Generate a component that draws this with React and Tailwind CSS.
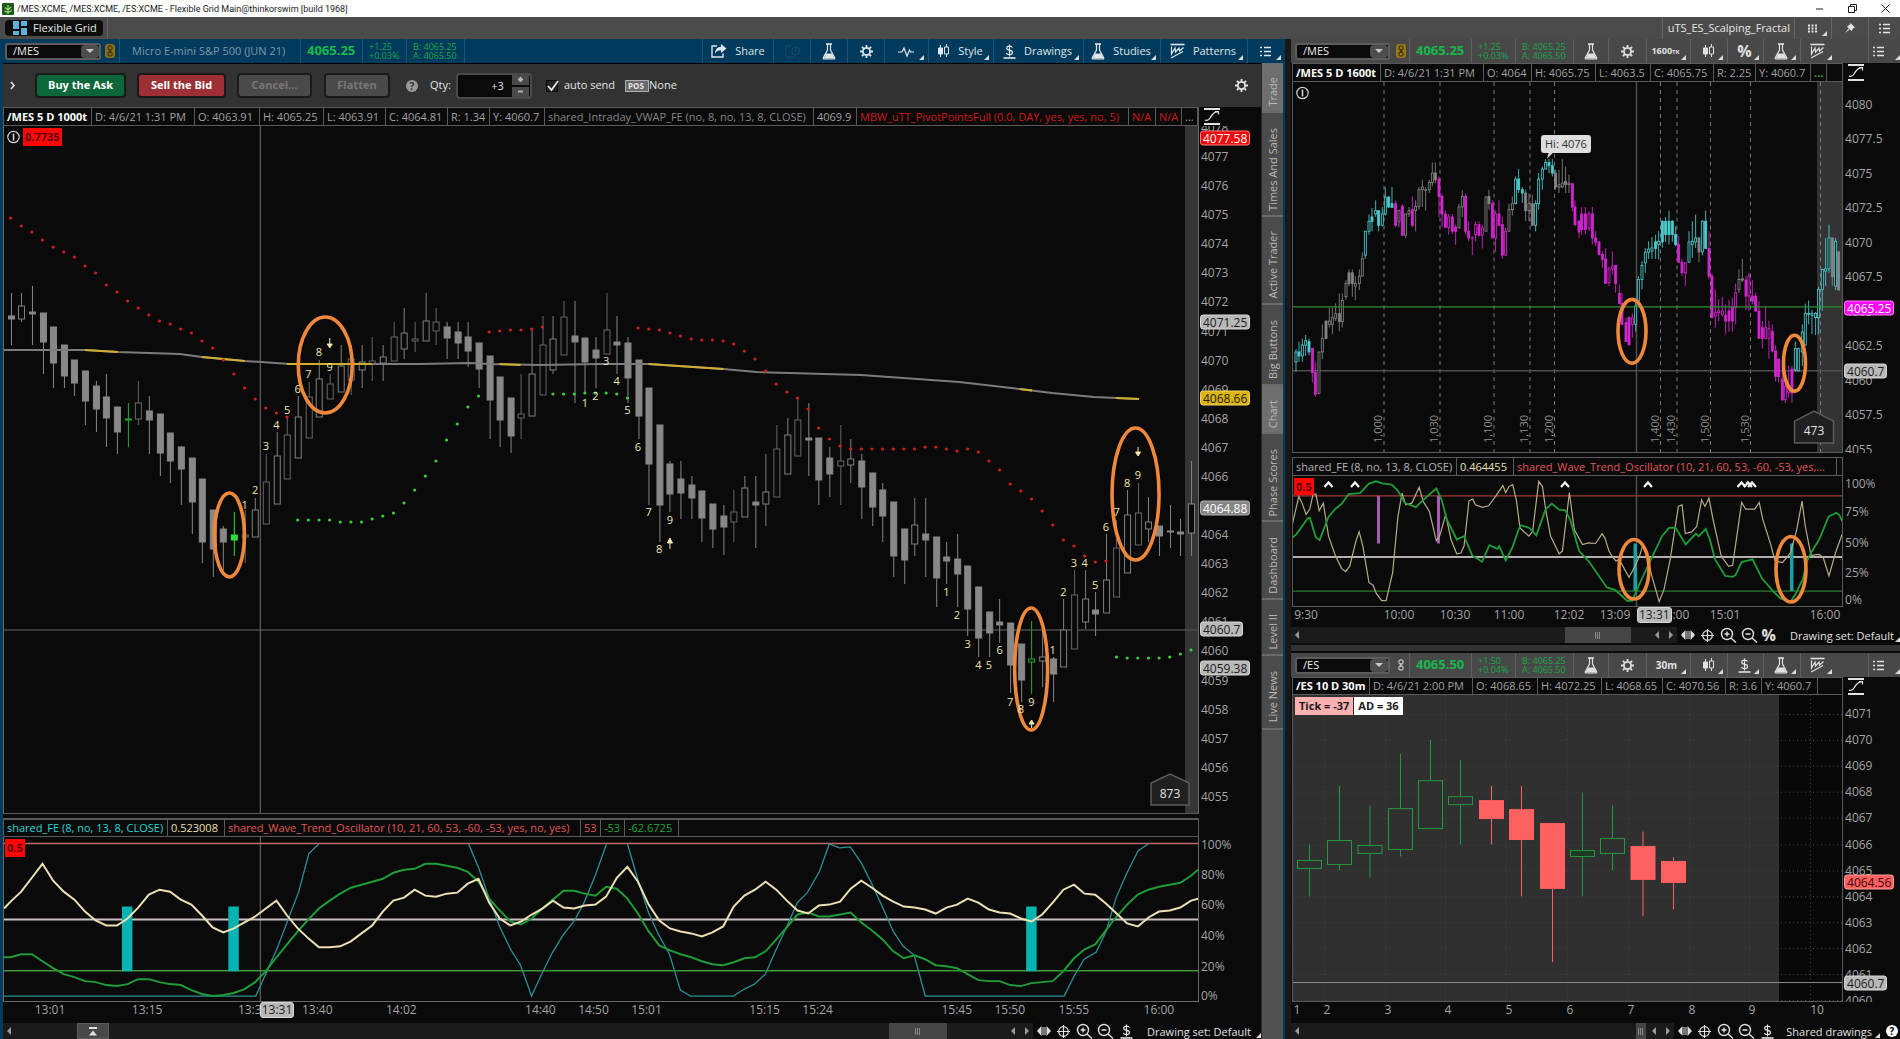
import React from "react";

/* ------------------------------------------------------------------ data */

const MAIN_X0 = 10.6;
const MAIN_STEP = 10.643;
const bx = (i) => MAIN_X0 + MAIN_STEP * i;

// [high, body top, body bottom, low, kind]  f = filled, h = hollow, g/G = green
const MAIN_CANDLES = [
  [293, 316, 319, 345, "f"], [293, 306, 319, 322, "h"], [286, 312, 314, 345, "f"], [313, 313, 342, 374, "f"],
  [327, 327, 363, 388, "f"], [345, 345, 376, 388, "f"], [360, 360, 383, 396, "f"], [371, 371, 401, 425, "f"],
  [381, 386, 409, 432, "f"], [374, 397, 418, 447, "f"], [407, 407, 432, 454, "f"], [403, 419, 420, 447, "g"],
  [381, 403, 419, 425, "h"], [396, 411, 420, 454, "f"], [414, 414, 453, 476, "f"], [433, 433, 461, 483, "f"],
  [446, 447, 469, 505, "f"], [458, 458, 502, 534, "f"], [479, 479, 542, 563, "f"], [510, 510, 549, 577, "f"],
  [526, 529, 542, 570, "f"], [512, 535, 540, 556, "G"], [510, 535, 537, 563, "h"], [498, 510, 537, 537, "h"],
  [454, 482, 524, 524, "h"], [432, 456, 504, 504, "h"], [418, 435, 479, 479, "h"], [396, 417, 458, 458, "h"],
  [382, 397, 438, 438, "h"], [360, 379, 417, 417, "h"], [374, 384, 399, 399, "h"], [345, 366, 392, 392, "h"],
  [345, 359, 380, 395, "h"], [345, 362, 370, 388, "h"], [337, 361, 364, 381, "h"], [345, 357, 363, 381, "h"],
  [322, 337, 361, 361, "h"], [308, 333, 349, 359, "h"], [322, 339, 341, 352, "h"], [293, 321, 341, 341, "h"],
  [308, 322, 331, 345, "h"], [322, 327, 338, 359, "f"], [322, 332, 343, 359, "f"], [322, 337, 351, 367, "f"],
  [343, 343, 369, 388, "f"], [356, 356, 400, 439, "f"], [377, 377, 420, 447, "f"], [398, 398, 436, 453, "f"],
  [374, 414, 418, 439, "h"], [328, 374, 416, 416, "h"], [316, 345, 395, 395, "h"], [316, 339, 370, 374, "h"],
  [301, 317, 355, 355, "h"], [301, 336, 342, 403, "f"], [338, 338, 362, 393, "f"], [337, 350, 358, 388, "f"],
  [293, 330, 354, 354, "h"], [316, 342, 345, 374, "f"], [337, 343, 378, 403, "f"], [360, 360, 416, 439, "f"],
  [388, 388, 464, 505, "f"], [425, 425, 505, 542, "f"], [461, 464, 494, 512, "f"], [461, 479, 493, 519, "f"],
  [476, 485, 498, 519, "f"], [491, 491, 518, 542, "f"], [504, 504, 529, 548, "f"], [505, 516, 527, 555, "f"],
  [490, 512, 522, 542, "h"], [476, 488, 517, 517, "h"], [476, 502, 505, 548, "f"], [454, 492, 504, 526, "h"],
  [425, 449, 497, 497, "h"], [418, 435, 474, 474, "h"], [398, 420, 456, 456, "h"], [403, 438, 440, 476, "f"],
  [438, 438, 480, 505, "f"], [447, 458, 474, 497, "f"], [425, 461, 466, 505, "h"], [439, 459, 465, 483, "h"],
  [454, 461, 487, 519, "f"], [473, 473, 507, 526, "f"], [483, 490, 516, 542, "f"], [502, 502, 556, 577, "f"],
  [529, 529, 560, 584, "f"], [498, 525, 544, 556, "h"], [498, 534, 540, 577, "f"], [537, 537, 578, 607, "f"],
  [542, 557, 561, 584, "f"], [534, 559, 574, 607, "f"], [566, 566, 609, 636, "f"], [587, 587, 638, 657, "f"],
  [612, 612, 633, 657, "f"], [599, 622, 625, 643, "f"], [623, 623, 665, 693, "f"], [644, 644, 680, 702, "f"],
  [621, 659, 662, 694, "g"], [627, 657, 661, 687, "h"], [657, 659, 674, 702, "f"], [599, 630, 667, 667, "h"],
  [570, 595, 649, 649, "h"], [570, 599, 622, 629, "h"], [592, 610, 614, 636, "f"], [534, 580, 613, 613, "h"],
  [520, 548, 597, 597, "h"], [490, 515, 573, 573, "h"], [483, 513, 545, 545, "h"], [497, 522, 529, 542, "h"],
  [526, 526, 536, 556, "f"], [505, 531, 532, 548, "f"], [519, 532, 534, 556, "f"], [461, 504, 533, 556, "h"],
];

// [bar index, y, digit]
const COUNTS = [
  [22, 505, 1], [23, 490, 2], [24, 446, 3], [25, 425, 4], [26, 410, 5], [27, 389, 6], [28, 374, 7], [29, 352, 8], [30, 367, 9],
  [54, 403, 1], [55, 396, 2], [56, 361, 3], [57, 381, 4], [58, 410, 5], [59, 447, 6], [60, 512, 7], [61, 549, 8], [62, 520, 9],
  [88, 592, 1], [89, 615, 2], [90, 644, 3], [91, 665, 4], [92, 665, 5], [93, 650, 6], [94, 702, 7], [95, 709, 8], [96, 702, 9],
  [98, 650, 1], [99, 592, 2], [100, 563, 3], [101, 563, 4], [102, 585, 5], [103, 527, 6], [104, 512, 7], [105, 483, 8], [106, 475, 9],
];

const RED_DOTS = [
  [0, [218, 226, 232, 240, 247, 252, 257, 266, 273, 285, 292, 301, 308, 315, 321, 324, 329, 333, 341, 348, 360, 374, 388, 399, 408, 413, 417]],
  [45, [332, 331, 330, 330, 329, 327]],
  [59, [328, 329, 330, 333, 336, 339, 340, 340, 341, 344, 351, 359, 371, 384, 392, 398, 409, 428, 439, 446, 449, 449, 449, 449, 449, 449, 449, 447, 447, 449, 451, 449, 452, 461, 470, 484, 491, 499, 511, 525, 540, 546, 556, 562, 561]],
];
const GREEN_DOTS = [
  [27, [520, 520, 520, 520, 522, 522, 522, 519, 516, 513, 503, 490, 476, 461, 440, 424, 407, 396]],
  [51, [394, 394, 394, 393, 393, 393, 394, 398]],
  [104, [657, 658, 658, 658, 658, 657, 654, 650]],
];

const CREAM = [902, 892, 878, 864, 881, 892, 900, 912, 921, 926, 926, 919, 908, 895, 890, 892, 900, 905, 916, 928, 933, 929, 923, 917, 909, 901, 916, 929, 939, 948, 948, 947, 942, 934, 926, 912, 901, 898, 890, 896, 897, 894, 893, 884, 879, 903, 919, 926, 922, 915, 909, 901, 908, 909, 906, 905, 897, 878, 867, 882, 905, 921, 929, 932, 934, 937, 933, 927, 907, 896, 890, 882, 890, 901, 911, 914, 906, 905, 902, 889, 881, 888, 896, 902, 907, 908, 910, 914, 908, 905, 899, 903, 910, 913, 914, 919, 922, 915, 903, 890, 885, 894, 895, 904, 914, 924, 927, 918, 912, 911, 908, 901];
const GREEN = [958, 955, 955, 962, 969, 975, 978, 982, 983, 986, 987, 985, 980, 980, 983, 985, 986, 991, 995, 997, 996, 994, 990, 983, 972, 958, 945, 932, 920, 909, 901, 894, 888, 885, 882, 879, 873, 870, 869, 864, 864, 866, 868, 872, 882, 899, 911, 922, 925, 919, 909, 900, 891, 891, 894, 896, 887, 889, 899, 914, 932, 946, 951, 955, 958, 962, 965, 966, 963, 959, 958, 952, 940, 928, 915, 913, 917, 917, 915, 913, 923, 931, 940, 952, 959, 956, 960, 966, 967, 969, 975, 981, 982, 982, 986, 987, 984, 983, 982, 972, 959, 950, 945, 931, 917, 905, 895, 890, 887, 885, 883, 876];
const line = (ys) => ys.map((y, i) => `${bx(i).toFixed(1)},${y}`).join(" ");

const CYAN_LINES = [
  "4,997 256,997 277,950 299,892 309,854 319,844",
  "469,844 479,868 489,897 500,927 511,950 521,966 532,997 543,973 553,953 564,935 575,921 585,902 596,875 607,844",
  "628,844 639,882 649,913 659,935 670,955 681,991 691,997 734,997 745,990 755,985 766,975 776,952 787,928 798,903 808,893 820,872 830,844 840,848 851,847 862,863 872,883 883,907 894,932 904,947 915,956 926,997 1065,997 1075,977 1085,960 1097,953 1107,932 1117,898 1128,873 1139,851 1149,844",
];

// [x, high, body top, body bottom, low, colour]; capitals are filled; one unit is a third of a pixel
const TICK_A = [
  [18, 660, 668, 698, 728, "c"], [27, 637, 668, 680, 698, "C"], [37, 628, 647, 680, 698, "c"], [47, 617, 634, 648, 680, "c"],
  [57, 628, 637, 668, 678, "C"], [67, 657, 657, 730, 760, "M"], [76, 698, 730, 795, 803, "M"], [87, 668, 668, 793, 793, "g"],
  [97, 585, 628, 668, 690, "g"], [108, 575, 575, 628, 628, "G"], [118, 535, 575, 585, 595, "g"], [127, 535, 565, 585, 615, "g"],
  [137, 522, 553, 567, 575, "g"], [148, 492, 553, 577, 606, "G"], [157, 492, 513, 577, 595, "g"], [168, 452, 462, 502, 512, "g"],
  [177, 420, 430, 462, 470, "G"], [187, 420, 430, 462, 502, "G"], [196, 440, 462, 470, 512, "g"], [208, 420, 440, 462, 482, "g"],
  [217, 368, 388, 440, 440, "g"], [226, 305, 305, 377, 388, "c"], [237, 255, 275, 305, 315, "c"], [246, 235, 262, 275, 305, "C"],
  [257, 212, 243, 253, 262, "c"], [266, 243, 243, 287, 305, "C"], [277, 232, 253, 287, 290, "c"], [286, 172, 202, 253, 258, "c"],
  [296, 200, 202, 232, 235, "C"], [306, 172, 222, 233, 235, "C"], [317, 212, 222, 287, 293, "M"], [327, 240, 243, 275, 293, "g"],
  [337, 224, 230, 317, 320, "M"], [347, 253, 253, 317, 326, "g"], [357, 232, 243, 253, 262, "g"], [367, 200, 240, 287, 293, "M"],
  [377, 212, 230, 243, 305, "g"], [387, 172, 180, 230, 240, "g"], [397, 150, 172, 180, 232, "g"], [407, 172, 180, 182, 243, "g"],
  [418, 150, 158, 180, 190, "g"], [427, 98, 130, 158, 170, "g"], [436, 98, 130, 150, 160, "G"], [447, 140, 148, 200, 262, "M"],
  [456, 192, 200, 253, 293, "M"], [466, 243, 253, 293, 295, "M"], [476, 253, 262, 293, 315, "m"], [487, 253, 262, 305, 313, "M"],
  [497, 285, 293, 305, 346, "M"], [507, 222, 232, 295, 295, "g"], [517, 182, 200, 232, 262, "g"], [527, 192, 200, 305, 315, "M"],
  [536, 275, 305, 325, 335, "M"], [547, 320, 325, 327, 377, "m"], [557, 275, 285, 315, 335, "m"], [567, 275, 285, 317, 320, "M"],
  [577, 285, 295, 317, 357, "m"], [588, 200, 202, 305, 305, "g"], [597, 180, 200, 222, 240, "G"], [607, 212, 222, 325, 326, "M"],
  [617, 243, 253, 325, 367, "m"], [627, 212, 253, 287, 290, "M"], [637, 262, 285, 377, 388, "M"], [647, 295, 305, 377, 377, "m"],
  [657, 222, 240, 305, 305, "g"], [667, 200, 222, 240, 258, "g"], [677, 140, 148, 222, 224, "c"], [686, 118, 148, 180, 190, "C"],
  [697, 172, 180, 190, 220, "C"], [707, 180, 190, 243, 275, "G"], [717, 192, 222, 243, 275, "g"], [727, 195, 222, 287, 287, "G"],
  [737, 212, 222, 287, 305, "c"], [746, 130, 148, 222, 240, "c"], [757, 110, 118, 148, 180, "c"], [767, 88, 98, 118, 118, "c"],
  [777, 88, 98, 108, 130, "C"], [787, 88, 108, 130, 140, "C"], [797, 120, 130, 172, 180, "G"], [807, 120, 165, 172, 190, "g"],
  [817, 88, 160, 172, 175, "g"], [827, 110, 155, 165, 190, "G"], [837, 135, 160, 165, 190, "g"],
];
const TICK_B = [
  [67, 10, 12, 82, 95, "M"], [75, 62, 82, 135, 140, "M"], [87, 120, 125, 157, 175, "M"], [95, 82, 103, 150, 165, "M"],
  [106, 82, 103, 150, 165, "M"], [117, 95, 103, 145, 155, "m"], [127, 82, 103, 175, 195, "M"], [137, 155, 175, 188, 200, "M"],
  [147, 185, 187, 225, 228, "M"], [157, 215, 225, 240, 265, "M"], [167, 205, 238, 312, 312, "M"], [177, 262, 268, 310, 320, "m"],
  [187, 215, 260, 268, 285, "m"], [197, 258, 258, 312, 340, "M"], [208, 315, 342, 372, 375, "M"], [216, 340, 372, 435, 435, "M"],
  [228, 415, 430, 487, 487, "M"], [237, 412, 415, 497, 497, "M"], [247, 402, 415, 435, 475, "m"], [257, 365, 380, 435, 457, "c"],
  [265, 290, 300, 365, 380, "c"], [276, 245, 258, 300, 330, "c"], [286, 205, 218, 250, 280, "c"], [296, 185, 208, 218, 238, "c"],
  [306, 172, 205, 215, 238, "c"], [317, 165, 187, 207, 238, "C"], [326, 155, 185, 195, 240, "c"], [337, 122, 125, 187, 205, "C"],
  [347, 112, 125, 165, 187, "C"], [357, 93, 125, 165, 195, "C"], [367, 122, 125, 165, 187, "C"], [377, 140, 165, 195, 200, "C"],
  [386, 170, 195, 248, 250, "M"], [396, 238, 248, 280, 290, "M"], [406, 248, 250, 280, 320, "m"], [417, 155, 187, 248, 250, "c"],
  [427, 125, 185, 195, 235, "c"], [437, 105, 175, 187, 205, "c"], [447, 172, 175, 217, 248, "G"], [457, 122, 125, 217, 228, "c"],
  [467, 93, 125, 207, 207, "C"], [477, 155, 207, 290, 300, "M"], [486, 282, 290, 415, 415, "M"], [496, 330, 400, 410, 445, "m"],
  [506, 360, 395, 400, 425, "m"], [517, 352, 395, 405, 412, "m"], [527, 375, 408, 425, 465, "M"], [537, 362, 395, 425, 457, "M"],
  [547, 355, 382, 425, 457, "M"], [557, 312, 340, 385, 435, "m"], [567, 270, 300, 330, 340, "g"], [577, 238, 298, 302, 308, "G"],
  [588, 290, 302, 350, 392, "M"], [597, 280, 290, 350, 395, "m"], [607, 302, 350, 365, 375, "M"], [617, 340, 350, 395, 398, "M"],
  [627, 365, 395, 477, 478, "M"], [637, 425, 445, 477, 508, "M"], [647, 382, 445, 477, 478, "m"], [657, 425, 448, 477, 538, "m"],
  [667, 435, 457, 515, 520, "M"], [677, 498, 515, 592, 607, "M"], [686, 537, 540, 592, 610, "M"], [697, 560, 600, 662, 665, "M"],
  [706, 590, 622, 662, 672, "m"], [716, 560, 622, 640, 655, "m"], [726, 560, 570, 642, 672, "M"], [736, 487, 508, 572, 578, "c"],
  [745, 505, 508, 575, 578, "c"], [757, 435, 458, 518, 560, "c"], [766, 373, 402, 497, 500, "c"], [776, 363, 402, 405, 435, "c"],
  [786, 392, 402, 408, 465, "c"], [797, 398, 402, 415, 467, "c"], [806, 322, 330, 415, 465, "c"], [817, 268, 270, 330, 395, "c"],
  [827, 175, 268, 275, 320, "c"], [837, 135, 175, 268, 280, "c"], [847, 175, 175, 292, 320, "G"], [857, 175, 185, 320, 332, "c"],
  [866, 215, 217, 332, 332, "G"],
];
const TICK_COLOURS = { c: "#4fd8dc", m: "#de28da", g: "#8c8c8c" };

const OSC_GREEN = "79,595 90,583 117,536 122,534 137,594 146,602 168,531 185,507 200,492 217,463 245,460 267,431 284,424 300,430 323,434 338,453 355,490 382,502 400,480 432,446 445,480 458,540 482,600 500,590 520,648 544,667 562,617 582,628 586,620 602,663 618,625 635,565 640,557 660,565 677,587 700,508 715,492 733,510 748,512 760,540 782,635 805,665 850,745 870,752 900,786 912,785 935,720 960,655 985,590 1002,565 1018,564 1043,615 1068,582 1075,590 1092,568 1102,600 1115,660 1140,710 1158,713 1165,708 1180,668 1207,660 1230,718 1260,760 1275,778 1300,788 1312,765 1330,720 1340,665 1350,640 1370,600 1393,531 1412,519 1420,527 1427,546";
const OSC_CREAM = "79,555 95,470 103,490 113,524 122,508 130,463 137,463 145,513 155,490 168,590 185,650 200,688 210,697 220,680 235,605 243,577 252,620 267,730 277,738 285,763 298,785 309,785 325,700 338,530 348,460 357,495 372,490 390,442 400,485 415,515 432,604 440,590 455,525 468,600 482,643 492,641 500,620 512,483 521,478 528,495 545,503 560,498 578,468 595,437 602,458 610,440 619,434 628,480 637,565 648,578 659,590 668,575 683,424 692,440 700,510 712,590 733,643 741,635 758,458 770,570 790,615 805,610 822,612 838,583 845,595 855,635 865,655 872,665 880,660 904,714 915,690 930,650 937,620 945,635 960,710 978,788 990,750 1005,660 1025,500 1034,495 1042,582 1058,577 1070,560 1082,480 1090,500 1100,475 1110,540 1130,650 1148,681 1158,678 1180,488 1190,508 1212,508 1223,488 1232,540 1250,610 1262,665 1280,670 1300,640 1315,570 1328,484 1336,560 1350,648 1370,645 1380,655 1394,710 1410,640 1426,585";

const ES_CANDLES = [
  [1309.5, 845, 861, 869, 897, "g"], [1339.5, 786, 841, 865, 871, "g"], [1370, 806, 846, 854, 878, "g"], [1400.5, 754, 809, 850, 857, "g"],
  [1430.5, 740, 781, 829, 829, "g"], [1460.5, 760, 797, 805, 845, "g"], [1491.5, 786, 801, 819, 845, "r"], [1521.5, 786, 810, 840, 897, "r"],
  [1552.5, 824, 824, 889, 963, "r"], [1582.5, 793, 851, 857, 897, "G"], [1612.5, 806, 839, 854, 871, "g"], [1643, 832, 847, 880, 917, "r"],
  [1673.5, 858, 862, 883, 910, "r"],
];

/* ----------------------------------------------------------------- icons */

const Svg = ({ w = 14, h = 14, className = "", children }) => (
  <svg width={w} height={h} viewBox={`0 0 ${w} ${h}`} fill="none" stroke="currentColor" aria-hidden="true" className={`shrink-0 ${className}`}>
    {children}
  </svg>
);
const Flask = () => (
  <Svg w={14} h={17}>
    <path d="M4 1h6" strokeWidth="1.6" />
    <path d="M5.5 1v6L1.3 14.8q-.4 1.2 1 1.2h9.4q1.4 0 1-1.2L8.5 7V1" strokeWidth="1.2" />
    <path d="M4 10.5h6l2.5 5h-11z" fill="currentColor" stroke="none" />
  </Svg>
);
const Gear = () => (
  <Svg w={15} h={15}>
    <circle cx="7.5" cy="7.5" r="3.6" strokeWidth="1.8" />
    <path d="M7.5 1v2.5M7.5 11.5V14M1 7.5h2.5M11.5 7.5H14M2.9 2.9l1.8 1.8M10.3 10.3l1.8 1.8M2.9 12.1l1.8-1.8M10.3 4.7l1.8-1.8" strokeWidth="1.8" />
  </Svg>
);
const Pulse = () => (
  <Svg w={16} h={13}><path d="M0 7h4l2-4 3 8 2.5-6 1.2 2H16" strokeWidth="1.2" /></Svg>
);
const CandleIcon = () => (
  <Svg w={13} h={14}>
    <path d="M3.5 1v12M9.5 0v3M9.5 10v3" />
    <path d="M1.5 4h4v6h-4z" fill="currentColor" />
    <path d="M7.5 3h4v7h-4z" />
  </Svg>
);
const Dollar = () => (
  <Svg w={13} h={15}>
    <path d="M9.5 3.5Q8.8 2.2 6.5 2.2 3.7 2.2 3.7 4.2 3.7 5.7 6.5 6.2 9.5 6.8 9.5 8.5 9.5 10.6 6.5 10.6 4 10.6 3.3 9M6.5.5v12" strokeWidth="1.2" />
    <path d="M.5 14h12" strokeWidth="1.6" />
  </Svg>
);
const PatternsIcon = () => (
  <Svg w={15} h={16}>
    <path d="M.5 1.5h14" strokeWidth="1.6" />
    <path d="M1.5 3.5V11L5 5l.5 4L9 5l.5 3 4-3.5M1 15L13 8.5" strokeWidth="1.2" />
  </Svg>
);
const ListIcon = () => (
  <Svg w={11} h={11}>
    <path d="M0 1.5h2M0 5.5h2M0 9.5h2M4 1.5h7M4 5.5h7M4 9.5h7" strokeWidth="1.4" />
  </Svg>
);
const ShareIcon = () => (
  <Svg w={16} h={14}>
    <path d="M6 2H1v11h11V9.5" strokeWidth="1.4" />
    <path d="M10 0l5.5 4.5L10 9V6.3Q6 6.3 4 9.5 4.3 3 10 2.8z" fill="currentColor" stroke="none" />
  </Svg>
);
const Corner = ({ className = "right-1 bottom-[3px]" }) => (
  <span aria-hidden="true" className={`absolute border-b-[5px] border-l-[5px] border-b-[#dcdcdc] border-l-transparent ${className}`} />
);
const ScaleIcon = () => (
  <Svg w={16} h={17} className="text-[#e2e2e2]">
    <path d="M0 1h16M0 16h16" strokeWidth="2" />
    <path d="M1 12q3 1.5 5-2t4-5 4-1M11 3.5h3.5v3" strokeWidth="1.2" />
  </Svg>
);
const Info = () => (
  <Svg w={13} h={14} className="text-[#d0d0d0]">
    <circle cx="6.5" cy="7" r="5.7" strokeWidth="1.2" />
    <path d="M6.5 3.5v7" strokeWidth="1.6" />
  </Svg>
);
const ZoomIcon = ({ plus }) => (
  <Svg w={17} h={16}>
    <circle cx="7" cy="7" r="5.5" strokeWidth="1.4" />
    <path d={plus ? "M4.5 7h5M7 4.5v5M11 11l5 4.5" : "M4.5 7h5M11 11l5 4.5"} strokeWidth="1.4" />
  </Svg>
);
const Crosshair = () => (
  <Svg w={13} h={13}><circle cx="6.5" cy="6.5" r="4.8" strokeWidth="1.2" /><path d="M6.5 0v13M0 6.5h13" strokeWidth="1.2" /></Svg>
);
const Pan = () => (
  <Svg w={14} h={10}>
    <path d="M4.5 0v10L0 5zM9.5 0v10L14 5z" fill="currentColor" stroke="none" />
    <path d="M6 1v8M8 1v8" />
  </Svg>
);
const LinkBadge = () => (
  <Svg w={6} h={12}><rect x="1" y="1" width="4" height="4" rx="1" /><rect x="1" y="7" width="4" height="4" rx="1" /><path d="M3 4v4" /></Svg>
);

/* ------------------------------------------------------- building blocks */

const BoxContext = React.createContext([0, 0, 1, 1]);

/** A drawing area whose coordinates run over box = [x, y, width, height]. */
function Plot({ box, className = "", children, labels, title }) {
  return (
    <BoxContext.Provider value={box}>
      <div className={`relative overflow-hidden ${className}`}>
        <svg role="img" aria-label={title} viewBox={box.join(" ")} preserveAspectRatio="none" className="absolute inset-0 h-full w-full">
          {children}
        </svg>
        {labels}
      </div>
    </BoxContext.Provider>
  );
}

function At({ x, y, className = "", children }) {
  const [left, top, w, h] = React.useContext(BoxContext);
  return (
    <span className={`absolute whitespace-nowrap ${className}`} style={{ left: `${((x - left) / w) * 100}%`, top: `${((y - top) / h) * 100}%` }}>
      {children}
    </span>
  );
}

function Axis({ box, ticks, tags = [], className = "" }) {
  return (
    <BoxContext.Provider value={box}>
      <div className={`relative overflow-hidden text-xs leading-4 text-[#a4a4a4] ${className}`}>
        {ticks.map(([t, y]) => <At key={t} x={box[0] + 2} y={y} className="-translate-y-1/2">{t}</At>)}
        {tags.map(([t, y, c]) => (
          <At key={t} x={box[0] + 1} y={y} className={`-translate-y-1/2 rounded-[3px] border px-0.5 leading-[13px] ${c}`}>{t}</At>
        ))}
      </div>
    </BoxContext.Provider>
  );
}
const TAG_GRAY = "border-[#d8d8d8] bg-[#b8b8b8] text-[#1c1c1c]";

function TimeAxis({ box, ticks, tag, className = "" }) {
  return (
    <BoxContext.Provider value={box}>
      <div className={`relative shrink-0 overflow-hidden text-xs leading-4 text-[#a4a4a4] ${className}`}>
        {ticks.map(([t, x]) => <At key={t} x={x} y={box[1]} className="-translate-x-1/2">{t}</At>)}
        {tag && <At x={tag[1]} y={box[1]} className={`rounded-[3px] border px-px leading-[14px] ${TAG_GRAY}`}>{tag[0]}</At>}
      </div>
    </BoxContext.Provider>
  );
}

function HeaderRow({ cells, className = "", icon, axisWidth }) {
  return (
    <div className={`flex shrink-0 ${className}`}>
      <div className="flex min-w-0 flex-1 overflow-hidden border border-[#5a5a5a] text-[11px] leading-4">
        {cells.map(([text, width, style = "text-[#a0a0a0]"], i) => (
          <span key={i} className={`flex shrink-0 items-center overflow-hidden whitespace-nowrap border-r border-[#5a5a5a] pl-[3px] ${width} ${style}`}>{text}</span>
        ))}
      </div>
      <div className={`flex shrink-0 items-center pl-[5px] ${axisWidth}`}>{icon && <ScaleIcon />}</div>
    </div>
  );
}

function ToolButton({ label, text, children, className = "", corner }) {
  return (
    <button type="button" aria-label={label} className={`relative flex h-full shrink-0 items-center justify-center gap-2 border-l ${corner ? "pr-0.5" : ""} ${className}`}>
      {children}
      {text && <span className="text-[11px]">{text}</span>}
      {corner && <Corner />}
    </button>
  );
}

function Symbol({ id, value, className = "" }) {
  return (
    <span className={`relative flex h-[17px] shrink-0 items-center rounded-[3px] border-2 border-[#5c5c5c] bg-[#0a0a0a] ${className}`}>
      <select id={id} aria-label="Symbol" className="h-full w-full appearance-none bg-transparent pl-1.5 text-[11px] leading-3 text-[#ececec] outline-none">
        <option>{value}</option>
      </select>
      <span aria-hidden="true" className="pointer-events-none absolute inset-y-0 right-0 flex w-[18px] items-center justify-center rounded-sm bg-[#4d4d4d]">
        <span className="border-x-4 border-t-4 border-x-transparent border-t-[#c8c8c8]" />
      </span>
    </span>
  );
}

function Quote({ last, change, percent, bid, ask, border }) {
  return (
    <>
      <span className={`flex h-full w-[62px] shrink-0 items-center border-l pl-1.5 text-[13px] font-bold text-[#17b84c] ${border}`}>{last}</span>
      <span className={`flex h-full w-11 shrink-0 flex-col justify-center border-l pl-1.5 text-[9px] leading-[9px] text-[#17a547] ${border}`}>
        <span>{change}</span><span>{percent}</span>
      </span>
      <span className={`flex h-full w-[58px] shrink-0 flex-col justify-center border-l pl-1.5 text-[9px] leading-[9px] text-[#17a547] ${border}`}>
        <span>{bid}</span><span>{ask}</span>
      </span>
    </>
  );
}

function ScrollRow({ children, thumb, label, className = "", lead, tail = "pr-1.5" }) {
  return (
    <div className={`flex shrink-0 items-center text-[#e0e0e0] ${className}`}>
      <div className="relative flex h-full min-w-0 flex-1 items-center bg-[#1b1b1b] px-1 text-[#9a9a9a]">
        <button type="button" aria-label="Scroll left"><Svg w={4} h={8}><path d="M4 0v8L0 4z" fill="currentColor" stroke="none" /></Svg></button>
        {lead}
        <span className={`absolute inset-y-0 flex items-center justify-center bg-[#454545] text-[#8a8a8a] ${thumb}`}>
          <Svg w={6} h={7}><path d="M.5 0v7M2.5 0v7M4.5 0v7" /></Svg>
        </span>
        <span className="ml-auto flex gap-2.5">
          <button type="button" aria-label="Step back"><Svg w={4} h={8}><path d="M4 0v8L0 4z" fill="currentColor" stroke="none" /></Svg></button>
          <button type="button" aria-label="Step forward"><Svg w={4} h={8}><path d="M0 0v8L4 4z" fill="currentColor" stroke="none" /></Svg></button>
        </span>
      </div>
      <button type="button" aria-label="Pan" className="ml-1"><Pan /></button>
      <button type="button" aria-label="Crosshair" className="ml-1.5"><Crosshair /></button>
      <button type="button" aria-label="Zoom in" className="ml-1.5"><ZoomIcon plus /></button>
      <button type="button" aria-label="Zoom out" className="ml-1"><ZoomIcon /></button>
      {children}
      <button type="button" className={`relative h-full whitespace-nowrap text-left text-[11px] leading-[15px] ${tail}`}>{label}<Corner className="right-0 bottom-px" /></button>
    </div>
  );
}

const Ring = ({ cx, cy, rx, ry }) => <ellipse cx={cx} cy={cy} rx={rx} ry={ry} fill="none" stroke="#f0883c" strokeWidth="3.6" />;

function Candle({ x, c, half, stroke, fill }) {
  const [hi, top, bot, lo] = c;
  return (
    <g stroke={stroke} fill={fill}>
      {hi < top && <path d={`M${x} ${hi}V${top}`} />}
      {lo > bot && <path d={`M${x} ${bot}V${lo}`} />}
      <rect x={x - half} y={top} width={half * 2} height={Math.max(bot - top, 0.5)} />
    </g>
  );
}

const Dots = ({ runs, fill }) => runs.flatMap(([s, ys]) => ys.map((y, i) => <circle key={`${s}-${i}`} cx={bx(s + i)} cy={y} r="1.6" fill={fill} />));

/* ------------------------------------------------------------ main panel */

const MAIN = [4, 126, 1195, 687];
const MAIN_OSC = [4, 837, 1195, 165];
const GREEN_TICK = { g: ["#22a836", "#0a0a0a"], G: ["#27e236", "#27e236"] };

function MainPlot() {
  return (
    <Plot
      box={MAIN}
      title="/MES 1000 tick chart"
      className="min-w-0 flex-1 border-x border-[#6a6a6a] bg-[#0a0a0a]"
      labels={
        <>
          {COUNTS.map(([i, y, n]) => (
            <At key={`${i}`} x={bx(i)} y={y} className="-translate-x-1/2 -translate-y-1/2 text-[11px] leading-3 text-[#f0e6ae]">{n}</At>
          ))}
          <div className="absolute left-[3px] top-0.5 flex items-center gap-[3px]">
            <Info />
            <span className="bg-[#ff0505] px-0.5 text-[11px] font-bold leading-[18px] text-[#5e0000]">0.7735</span>
          </div>
          <At x={1171} y={794} className="-translate-x-1/2 -translate-y-1/2 text-xs text-[#e0e0e0]">873</At>
        </>
      }
    >
      <rect x="1186" y="126" width="13" height="687" fill="#353535" />
      <path d="M4 630h1195" stroke="#4b4b4b" strokeWidth="1.5" />
      <path d="M260.5 126v687" stroke="#6f6f6f" />
      {MAIN_CANDLES.map((c, i) => {
        const k = c[4];
        const g = GREEN_TICK[k];
        const stroke = g ? g[0] : k === "f" ? "#888888" : i % 2 ? "#808080" : "#666666";
        const fill = g ? g[1] : k === "f" ? "#888888" : "#0a0a0a";
        return <Candle key={i} x={Math.round(bx(i)) + 0.5} c={c} half={3} stroke={stroke} fill={fill} />;
      })}
      <polyline fill="none" stroke="#7c7c7c" strokeWidth="2" points="4,350 50,350 85,350 118,352 180,354 202,357 245,361 290,364 372,364 420,364 470,363 490,364 540,365 600,364 649,364 724,369 757,372 862,375 960,382 1020,389 1053,393 1095,397 1140,399" />
      <path fill="none" stroke="#d2ad2f" strokeWidth="2" d="M85 350l33 2M202 357l43 4M287 364h85M500 364l21 1M649 364l75 5M1021 389l12 1.5M1117 398l23 1" />
      <Dots runs={RED_DOTS} fill="#cf1f1f" />
      <Dots runs={GREEN_DOTS} fill="#36cf36" />
      <g fill="#f0e6ae" stroke="#f0e6ae">
        <path d="M330 338v7M327.5 344h5l-2.5 4z" />
        <path d="M670.5 549v-7M668 543h5l-2.5-5z" />
        <path d="M1032.5 728v-6M1030 724h5l-2.5-4z" />
        <path d="M1139 447v6M1136.5 452h5l-2.5 4z" />
      </g>
      <Ring cx={229.6} cy={535} rx={15} ry={42} />
      <Ring cx={325.5} cy={365} rx={27} ry={48} />
      <Ring cx={1032} cy={669} rx={16.5} ry={61} />
      <Ring cx={1136.5} cy={494} rx={23.5} ry={66} />
      <path d="M1152 805v-22l19-9 19 9v22z" fill="#202020" stroke="#5c5c5c" strokeWidth="1.5" />
    </Plot>
  );
}

function MainOscillator() {
  return (
    <Plot
      box={MAIN_OSC}
      title="Oscillators"
      className="min-w-0 flex-1 border-x border-b border-[#6a6a6a] bg-[#0a0a0a]"
      labels={<span className="absolute left-px top-0.5 bg-[#ff0505] px-0.5 text-[11px] font-bold leading-[18px] text-[#5e0000]">0.5</span>}
    >
      <path d="M260.5 837v165" stroke="#6f6f6f" />
      <path d="M4 843.5h1195" stroke="#c0696a" strokeWidth="1.5" />
      <path d="M4 920h1195" stroke="#c9c0c4" strokeWidth="2" />
      <path d="M4 971.5h1195" stroke="#3a9a30" strokeWidth="1.5" />
      <path d="M122 907h10.5v65H122zM228.5 907H239v65h-10.5zM1027 907h10.5v65H1027z" fill="#06b3b3" />
      <g fill="none">
        {CYAN_LINES.map((p) => <polyline key={p} points={p} stroke="#2a9096" strokeWidth="1.3" />)}
        <polyline points={`4,958 ${line(GREEN)} 1199,870`} stroke="#1f9c38" strokeWidth="2" />
        <polyline points={`4,909 ${line(CREAM)} 1199,899`} stroke="#ece0b4" strokeWidth="2" />
      </g>
    </Plot>
  );
}

const TABS = [
  ["Trade", "flex-[50]"], ["Times And Sales", "flex-[104]"], ["Active Trader", "flex-[88]"], ["Big Buttons", "flex-[81]"],
  ["Chart", "flex-[48]"], ["Phase Scores", "flex-[88]"], ["Dashboard", "flex-[77]"], ["Level II", "flex-[56]"], ["Live News", "flex-[74]"],
];

function MainPanel() {
  const b = "border-[#1a5577]";
  return (
    <section className="flex min-h-0 min-w-0 flex-col bg-[#003a5c] pl-[3px]">
      <div className={`flex h-6 shrink-0 items-center pl-0.5 text-[#dfe6ea] ${b}`}>
        <Symbol id="main-symbol" value="/MES" className="w-24" />
        <span className="relative mx-1 flex h-3.5 w-2.5 items-center justify-center rounded-[3px] bg-[#8d6f14] text-[#2c2200]"><LinkBadge /></span>
        <span className={`flex h-full w-[181px] shrink-0 items-center border-l pl-3 text-[11px] text-[#7f99a9] ${b}`}>Micro E-mini S&amp;P 500 (JUN 21)</span>
        <Quote last="4065.25" change="+1.25" percent="+0.03%" bid="B: 4065.25" ask="A: 4065.50" border={b} />
        <span className={`h-full border-l ${b}`} />
        <div className="ml-auto flex h-full">
          <ToolButton text="Share" className={`w-[71px] ${b}`}><ShareIcon /></ToolButton>
          <ToolButton label="Alerts" className={`w-[37px] text-[#1c4d69] ${b}`}><Svg w={15} h={13}><path d="M9 12H1V1h5" /><circle cx="10.5" cy="6" r="3.8" /><path d="M10.5 4v3" /></Svg></ToolButton>
          <ToolButton label="Edit studies" className={`w-[37px] ${b}`}><Flask /></ToolButton>
          <ToolButton label="Chart settings" className={`w-[37px] ${b}`}><Gear /></ToolButton>
          <ToolButton label="Time frame" corner className={`w-[44px] ${b}`}><Pulse /></ToolButton>
          <ToolButton text="Style" corner className={`w-[65px] ${b}`}><CandleIcon /></ToolButton>
          <ToolButton text="Drawings" corner className={`w-[90px] ${b}`}><Dollar /></ToolButton>
          <ToolButton text="Studies" corner className={`w-[77px] ${b}`}><Flask /></ToolButton>
          <ToolButton text="Patterns" corner className={`w-[87px] ${b}`}><PatternsIcon /></ToolButton>
          <ToolButton label="Menu" corner className={`w-[38px] ${b}`}><ListIcon /></ToolButton>
        </div>
      </div>

      <div className="flex min-h-0 flex-1 pr-0.5">
        <div className="flex min-h-0 min-w-0 flex-1 flex-col bg-[#0a0a0a]">
          <form className="flex h-11 shrink-0 items-center border-t border-black bg-[#323232] text-[11px] text-[#e4e4e4]" onSubmit={(e) => e.preventDefault()}>
            <button type="button" aria-label="Expand" className="ml-[7px] w-[25px]"><Svg w={5} h={9}><path d="M1 1l3 3.5L1 8" strokeWidth="1.6" /></Svg></button>
            <button type="button" className="h-[25px] w-[91px] rounded-sm border-2 border-[#1a1a1a] bg-[#0b6639] font-bold text-white">Buy the Ask</button>
            <button type="button" className="ml-[11px] h-[25px] w-[89px] rounded-sm border-2 border-[#1a1a1a] bg-[#9c3034] font-bold text-white">Sell the Bid</button>
            <button type="button" disabled className="ml-[11px] h-[25px] w-[75px] rounded-sm border-2 border-[#1a1a1a] bg-[#4a4a4a] font-bold text-[#777]">Cancel...</button>
            <button type="button" disabled className="ml-3 h-[25px] w-[66px] rounded-sm border-2 border-[#1a1a1a] bg-[#4a4a4a] font-bold text-[#777]">Flatten</button>
            <span className="ml-4 flex size-3 items-center justify-center rounded-full bg-[#9a9a9a] text-[10px] font-bold leading-3 text-[#323232]">?</span>
            <label htmlFor="qty" className="ml-3">Qty:</label>
            <span className="ml-[5px] flex h-[26px] w-[76px] items-center rounded-sm border-2 border-[#4a4a4a] bg-[#0a0a0a] pr-px">
              <input id="qty" defaultValue="+3" className="h-full w-full min-w-0 flex-1 bg-transparent pr-2 text-right outline-none" />
              <span className="flex flex-col gap-0.5">
                <button type="button" aria-label="Increase" className="flex h-2.5 w-[17px] items-center justify-center bg-[#4a4a4a] text-[#bbb]"><Svg w={7} h={7}><path d="M1 3.5h5M3.5 1v5" strokeWidth="1.8" /></Svg></button>
                <button type="button" aria-label="Decrease" className="flex h-2.5 w-[17px] items-center justify-center bg-[#4a4a4a] text-[#bbb]"><Svg w={7} h={7}><path d="M1 3.5h5" strokeWidth="1.8" /></Svg></button>
              </span>
            </span>
            <label className="relative ml-3.5 flex items-center gap-1.5">
              <input type="checkbox" defaultChecked className="size-3 appearance-none border border-[#0a0a0a] bg-[#242424]" />
              <Svg w={13} h={12} className="pointer-events-none absolute left-0"><path d="M2 6l3.5 4L12 1" strokeWidth="1.8" /></Svg>
              auto send
            </label>
            <span className="ml-2.5 flex h-3 w-6 items-center border border-[#b0b0b0] bg-[#6a6a6a] pl-0.5 text-[8px] font-bold leading-3">POS</span>
            <span>None</span>
            <button type="button" aria-label="Order settings" className="ml-auto mr-3"><Gear /></button>
          </form>

          <HeaderRow
            icon axisWidth="w-[62px]" className="h-[19px]"
            cells={[
              ["/MES 5 D 1000t", "w-[88px]", "font-bold text-white"], ["D: 4/6/21 1:31 PM", "w-[103px]"], ["O: 4063.91", "w-[65px]"], ["H: 4065.25", "w-16"],
              ["L: 4063.91", "w-[62px]"], ["C: 4064.81", "w-[62px]"], ["R: 1.34", "w-[42px]"], ["Y: 4060.7", "w-[55px]"],
              ["shared_Intraday_VWAP_FE (no, 8, no, 13, 8, CLOSE)", "w-[269px]", "text-[#868686]"], ["4069.9", "w-[43px]"],
              ["MBW_uTT_PivotPointsFull (0.0, DAY, yes, yes, no, 5)", "w-[272px]", "text-[#d01818]"],
              ["N/A", "w-[27px]", "text-[#d01818]"], ["N/A", "w-[26px]", "text-[#d01818]"], ["...", "w-4"],
            ]}
          />
          <div className="flex min-h-0 flex-[687]">
            <MainPlot />
            <Axis
              box={[1199, 126, 62, 687]} className="w-[62px] shrink-0"
              ticks={Array.from({ length: 24 }, (_, i) => [4078 - i, 128 + i * 29.08]).filter(([t]) => t !== 4065)}
              tags={[
                ["4077.58", 138, "border-[#ff8080] bg-[#f00808] text-white"], ["4071.25", 322, TAG_GRAY],
                ["4068.66", 398, "border-[#f0d860] bg-[#dcb414] text-[#1c1c1c]"], ["4064.88", 508, "border-[#b0b0b0] bg-[#868686] text-white"],
                ["4060.7", 629, TAG_GRAY], ["4059.38", 668, TAG_GRAY],
              ]}
            />
          </div>
          <div className="mr-[62px] h-1.5 shrink-0 border-y border-[#5a5a5a]" />
          <HeaderRow
            axisWidth="w-[62px]" className="h-[18px]"
            cells={[
              ["shared_FE (8, no, 13, 8, CLOSE)", "w-[164px]", "text-[#28d6d6]"], ["0.523008", "w-[57px]", "text-[#ece0b4]"],
              ["shared_Wave_Trend_Oscillator (10, 21, 60, 53, -60, -53, yes, no, yes)", "w-[356px]", "text-[#e05656]"],
              ["53", "w-5", "text-[#e05656]"], ["-53", "w-6", "text-[#22a63c]"], ["-62.6725", "w-[54px]", "text-[#22a63c]"],
            ]}
          />
          <div className="flex min-h-0 flex-[165]">
            <MainOscillator />
            <Axis box={[1199, 837, 62, 165]} className="w-[62px] shrink-0" ticks={[["100%", 845], ["80%", 875], ["60%", 905], ["40%", 936], ["20%", 967], ["0%", 996]]} />
          </div>
          <TimeAxis
            box={[4, 1002, 1257, 21]} className="h-[21px]"
            ticks={[["13:01", 51], ["13:15", 148], ["13:30", 254], ["13:40", 318], ["14:02", 402], ["14:40", 541], ["14:50", 594], ["15:01", 647], ["15:15", 765], ["15:24", 818], ["15:45", 957], ["15:50", 1010], ["15:55", 1074], ["16:00", 1159]]}
            tag={["13:31", 260.5]}
          />
          <ScrollRow
            className="h-4" thumb="left-[86%] w-[58px]" label="Drawing set: Default" tail="pr-2.5"
            lead={<button type="button" aria-label="Collapse" className="ml-[66px] flex h-full w-8 items-center justify-center self-stretch border border-[#5c5c5c] bg-[#484848] text-[#e0e0e0]"><Svg w={8} h={9}><path d="M0 1h8" strokeWidth="2" /><path d="M4 3.5l4 5H0z" fill="currentColor" stroke="none" /></Svg></button>}
          >
            <button type="button" aria-label="Price scale" className="ml-1.5 mr-3.5"><Dollar /></button>
          </ScrollRow>
        </div>

        <nav className="flex w-[22px] shrink-0 flex-col border-l border-[#2a2a2a] bg-[#505050]">
          {TABS.map(([name, grow]) => (
            <button
              key={name} type="button"
              className={`flex min-h-0 items-center justify-center shadow-[inset_0_-2px_0_#6a6a6a] ${grow} ${name === "Trade" || name === "Chart" ? "bg-[#6e6e6e]" : "bg-[#4b4b4b]"}`}
            >
              <span className="rotate-180 whitespace-nowrap pb-2 text-[11px] leading-4 text-[#b8b8b8] [writing-mode:vertical-rl]">{name}</span>
            </button>
          ))}
          <span className="flex-[309]" />
        </nav>
      </div>
    </section>
  );
}

/* ---------------------------------------------------------- right panels */

function SideToolbar({ id, symbol, linked, quote, frame, scale }) {
  const b = "border-[#606060]";
  return (
    <div className="flex h-6 shrink-0 items-center bg-[#484848] pl-1 text-[#e0e0e0]">
      <Symbol id={id} value={symbol} className="w-[95px]" />
      <span className={`relative ml-1.5 mr-[3px] flex h-3.5 w-2.5 shrink-0 items-center justify-center rounded-[3px] ${linked ? "bg-[#9a7a18] text-[#2c2200]" : "text-[#e0e0e0]"}`}><LinkBadge /></span>
      <Quote {...quote} border={b} />
      <ToolButton label="Edit studies" className={`w-[35px] ${b}`}><Flask /></ToolButton>
      <ToolButton label="Chart settings" className={`w-[38px] ${b}`}><Gear /></ToolButton>
      <ToolButton label="Time frame" corner className={`w-11 ${b}`}>{frame}</ToolButton>
      <ToolButton label="Chart style" corner className={`w-[37px] ${b}`}><CandleIcon /></ToolButton>
      <ToolButton label="Drawings" corner className={`w-9 ${b}`}>{scale}</ToolButton>
      <ToolButton label="Studies" corner className={`w-[37px] ${b}`}><Flask /></ToolButton>
      <ToolButton label="Patterns" corner className={`w-9 ${b}`}><PatternsIcon /></ToolButton>
      <ToolButton label="Menu" className={`ml-auto w-8 pr-3 ${b}`}><ListIcon /><Corner className="right-0 bottom-[3px]" /></ToolButton>
    </div>
  );
}

function TickCandles({ data }) {
  return data.map(([x, hi, top, bot, lo, k]) => {
    const col = TICK_COLOURS[k.toLowerCase()];
    const filled = k !== k.toLowerCase();
    return (
      <g key={x} stroke={col} strokeWidth="2.6" fill={filled ? col : "#0a0a0a"} opacity="0.95">
        <path d={`M${x} ${hi}V${top}M${x} ${bot}V${lo}`} />
        <rect x={x - 3} y={top} width={6} height={Math.max(bot - top, 2)} />
      </g>
    );
  });
}

const HOURS = [[1384, "1,000"], [1440, "1,030"], [1494, "1,100"], [1530, "1,130"], [1554.5, "1,200"], [1660.5, "1,400"], [1677, "1,430"], [1710.5, "1,500"], [1750.5, "1,530"]];

function TickPanel() {
  return (
    <>
      <SideToolbar
        id="tick-symbol" symbol="/MES" linked
        quote={{ last: "4065.25", change: "+1.25", percent: "+0.03%", bid: "B: 4065.25", ask: "A: 4065.50" }}
        frame={<span className="whitespace-nowrap pr-1 text-[9px] font-bold">1600<span className="text-[6px]">TK</span></span>}
        scale={<span className="text-base font-bold leading-4">%</span>}
      />
      <HeaderRow
        icon axisWidth="w-[57px]" className="ml-px h-[19px]"
        cells={[
          ["/MES 5 D 1600t", "w-[88px]", "font-bold text-white"], ["D: 4/6/21 1:31 PM", "w-[103px]"], ["O: 4064", "w-12"], ["H: 4065.75", "w-16"], ["L: 4063.5", "w-[55px]"],
          ["C: 4065.75", "w-[63px]"], ["R: 2.25", "w-[42px]"], ["Y: 4060.7", "w-[55px]"], ["...", "w-4", "font-bold text-[#2fa83c]"],
        ]}
      />
      <div className="ml-px flex min-h-0 flex-[371]">
        <Plot
          box={[1293, 82, 549, 371]} title="/MES 1600 tick chart" className="min-w-0 flex-1 border-x border-b border-[#5a5a5a] bg-[#0a0a0a]"
          labels={
            <>
              {HOURS.map(([x, t]) => <At key={t} x={x - 6} y={430} className="-translate-x-1/2 -translate-y-1/2 rotate-180 text-[11px] leading-3 text-[#8e8e8e] [writing-mode:vertical-rl]">{t}</At>)}
              <At x={1541} y={144} className="-translate-y-1/2 rounded-[3px] bg-[#dedede] px-1 text-[11px] leading-[18px] text-[#303030]">Hi: 4076</At>
              <At x={1814} y={432} className="-translate-x-1/2 -translate-y-1/2 text-xs text-[#e0e0e0]">473</At>
              <span className="absolute left-[3px] top-1"><Info /></span>
            </>
          }
        >
          <rect x="1817" y="82" width="25" height="371" fill="#333333" />
          <path d={HOURS.map(([x]) => `M${x} 82V453`).join("") + "M1820.5 82V453"} stroke="#7a7a7a" strokeDasharray="4 4" />
          <path d="M1293 371.5h549M1636.5 82v371" stroke="#4e4e4e" strokeWidth="1.5" />
          <g transform="translate(1290 130) scale(0.3333)"><TickCandles data={TICK_A} /></g>
          <g transform="translate(1550 180) scale(0.3333)"><TickCandles data={TICK_B} /></g>
          <path d="M1293 307.5h549" stroke="#2f8f2f" strokeWidth="1.3" />
          <path d="M1547 159l2-7h5z" fill="#dedede" />
          <Ring cx={1632} cy={332} rx={14} ry={32} />
          <Ring cx={1794.5} cy={364} rx={11} ry={28} />
          <path d="M1794.5 444v-22l19.5-10 19.5 10v22z" fill="#202020" stroke="#5c5c5c" strokeWidth="1.5" />
        </Plot>
        <Axis
          box={[1842, 82, 56, 371]} className="w-[57px] shrink-0"
          ticks={[4080, 4077.5, 4075, 4072.5, 4070, 4067.5, 4065, 4062.5, 4060, 4057.5, 4055].map((t, i) => [t, 104.5 + i * 34.5])}
          tags={[["4065.25", 307.5, "border-[#ff80ff] bg-[#f808f8] text-white"], ["4060.7", 370.5, TAG_GRAY]]}
        />
      </div>
      <HeaderRow
        axisWidth="w-[57px]" className="ml-px mt-1 h-[19px]"
        cells={[
          ["shared_FE (8, no, 13, 8, CLOSE)", "w-[164px]", "text-[#b4b4b4]"], ["0.464455", "w-[57px]", "text-[#ece0b4]"],
          ["shared_Wave_Trend_Oscillator (10, 21, 60, 53, -60, -53, yes,...", "w-[323px]", "text-[#e05656]"],
        ]}
      />
      <div className="ml-px flex min-h-0 flex-[131]">
        <Plot
          box={[1293, 476, 549, 131]} title="Oscillators" className="min-w-0 flex-1 border-x border-b border-[#5a5a5a] bg-[#0a0a0a]"
          labels={<span className="absolute left-px top-0.5 bg-[#ff0505] px-0.5 text-[11px] font-bold leading-[17px] text-[#5e0000]">0.5</span>}
        >
          <path d="M1636.5 476v131" stroke="#4e4e4e" strokeWidth="1.5" />
          <path d="M1293 496h549" stroke="#a23a3a" strokeWidth="1.3" />
          <path d="M1293 557.7h549" stroke="#b4aeb0" strokeWidth="2" />
          <path d="M1293 592h549" stroke="#2f7a2f" strokeWidth="1.3" />
          <path d="M1377 496h3v48h-3zM1437 496h3v48h-3z" fill="#a45cb0" />
          <path d="M1633.5 544h3.5v48h-3.5zM1790 544h3.5v48h-3.5z" fill="#18a0a4" />
          <g transform="translate(1260 340) scale(0.40816 0.33333)" fill="none">
            <polyline points={OSC_CREAM} stroke="#b8ac84" strokeWidth="1.2" vectorEffect="non-scaling-stroke" />
            <polyline points={OSC_GREEN} stroke="#1f9c38" strokeWidth="1.8" vectorEffect="non-scaling-stroke" />
          </g>
          <g fill="none" stroke="#f4f4f4" strokeWidth="2.2">
            {[1328.5, 1355, 1565, 1648, 1741.5, 1748, 1752].map((x) => <path key={x} d={`M${x - 4} 487l4-4.5 4 4.5`} />)}
          </g>
          <Ring cx={1634} cy={570} rx={15} ry={30} />
          <Ring cx={1791} cy={570} rx={15} ry={33} />
        </Plot>
        <Axis box={[1842, 476, 56, 131]} className="w-[57px] shrink-0" ticks={[["100%", 484], ["75%", 512], ["50%", 543], ["25%", 573], ["0%", 600]]} />
      </div>
      <TimeAxis
        box={[1291, 607, 609, 20]} className="h-5"
        ticks={[["9:30", 1306], ["10:00", 1399], ["10:30", 1455], ["11:00", 1509], ["12:02", 1569], ["13:09", 1615], ["14:00", 1674], ["15:01", 1725], ["16:00", 1825]]}
        tag={["13:31", 1637]}
      />
      <ScrollRow className="h-4" thumb="left-[71%] w-[66px]" label="Drawing set: Default">
        <button type="button" aria-label="Percent scale" className="ml-1 mr-3.5 text-base font-bold leading-4">%</button>
      </ScrollRow>
    </>
  );
}

function EsPanel() {
  const xs = [1324.5, 1385.5, 1445.5, 1506.5, 1567.5, 1628.5, 1689.5, 1749.5, 1810.5];
  const ys = Array.from({ length: 12 }, (_, i) => 714 + Math.round(i * 26.1) + 0.5);
  return (
    <>
      <SideToolbar
        id="es-symbol" symbol="/ES"
        quote={{ last: "4065.50", change: "+1.50", percent: "+0.04%", bid: "B: 4065.25", ask: "A: 4065.50" }}
        frame={<span className="pr-0.5 text-[10px] font-bold">30m</span>}
        scale={<Dollar />}
      />
      <HeaderRow
        icon axisWidth="w-[57px]" className="ml-px h-[18px]"
        cells={[
          ["/ES 10 D 30m", "w-[77px]", "font-bold text-white"], ["D: 4/6/21 2:00 PM", "w-[103px]"], ["O: 4068.65", "w-[65px]"], ["H: 4072.25", "w-16"], ["L: 4068.65", "w-[61px]"],
          ["C: 4070.56", "w-[63px]"], ["R: 3.6", "w-9"], ["Y: 4060.7", "w-14"],
        ]}
      />
      <div className="ml-px flex min-h-0 flex-[307]">
        <Plot
          box={[1293, 695, 549, 307]} title="/ES 30 minute chart" className="min-w-0 flex-1 border-x border-b border-[#5a5a5a] bg-[#080808]"
          labels={
            <div className="absolute left-0.5 top-0.5 flex gap-px text-[11px] font-bold leading-[18px] text-[#1a1a1a]">
              <span className="bg-[#ffb0b0] px-1">Tick = -37</span>
              <span className="bg-white px-1">AD = 36</span>
            </div>
          }
        >
          <rect x="1293" y="695" width="486" height="307" fill="#303030" />
          <path d={xs.map((x) => `M${x} 695V1002`).join("") + ys.map((y) => `M1293 ${y}h549`).join("")} stroke="#424242" strokeDasharray="1 3" />
          <path d="M1293 983.5h549" stroke="#8e8e8e" />
          {ES_CANDLES.map((c) => {
            const k = c[5];
            const s = k === "r" ? "#ff6060" : "#239a3e";
            return <Candle key={c[0]} x={c[0]} c={c.slice(1)} half={12} stroke={s} fill={k === "r" ? "#ff6060" : k === "G" ? "#1c3a22" : "#303030"} />;
          })}
        </Plot>
        <Axis
          box={[1842, 695, 56, 307]} className="w-[57px] shrink-0"
          ticks={Array.from({ length: 12 }, (_, i) => [4071 - i, 714 + i * 26.1])}
          tags={[["4064.56", 881.5, "border-[#ff9a9a] bg-[#ff6060] text-[#3a0808]"], ["4060.7", 983, TAG_GRAY]]}
        />
      </div>
      <TimeAxis box={[1291, 1002, 609, 21]} className="h-[21px]" ticks={[["1", 1297], ["2", 1327], ["3", 1388], ["4", 1448], ["5", 1509], ["6", 1570], ["7", 1631], ["8", 1692], ["9", 1752], ["10", 1817]]} />
      <div className="flex">
        <ScrollRow className="h-4 min-w-0 flex-1" thumb="left-[90%] w-[10px]" label="Shared drawings" tail="pr-2">
          <button type="button" aria-label="Price scale" className="ml-1.5 mr-3"><Dollar /></button>
        </ScrollRow>
        <button type="button" aria-label="Help" className="ml-1.5 mr-0.5 flex size-3 items-center justify-center self-center rounded-full bg-white text-[10px] font-bold leading-3 text-black">?</button>
      </div>
    </>
  );
}

/* ------------------------------------------------------------------- app */

export default function App() {
  return (
    <div className="flex h-screen min-h-[640px] flex-col overflow-hidden bg-[#0a0a0a] font-['Open_Sans','Noto_Sans',sans-serif]">
      <header className="flex h-[17px] shrink-0 items-center bg-white text-[#1a1a1a]">
        <svg width="12" height="12" viewBox="0 0 12 12" aria-hidden="true" className="ml-0.5 shrink-0">
          <rect width="12" height="12" rx="1" fill="#1d5a1a" />
          <path d="M6 11V2M6 7L3 4.5M6 7l3-3M6 9.5L2.5 8M6 9.5l4-2" stroke="#9fdc7a" strokeWidth="1.1" />
        </svg>
        <h1 className="ml-[3px] whitespace-nowrap font-['Roboto',sans-serif] text-[9px] leading-4">/MES:XCME, /MES:XCME, /ES:XCME - Flexible Grid Main@thinkorswim [build 1968]</h1>
        <div className="ml-auto flex gap-6 pr-2.5">
          <button type="button" aria-label="Minimize"><Svg w={9} h={9}><path d="M1 5h7" /></Svg></button>
          <button type="button" aria-label="Restore"><Svg w={9} h={9}><path d="M.5 2.5h6v6h-6zM2.5 2V.5h6v6H7" /></Svg></button>
          <button type="button" aria-label="Close"><Svg w={9} h={9}><path d="M.5.5l8 8M8.5.5l-8 8" /></Svg></button>
        </div>
      </header>

      <div className="flex h-[22px] shrink-0 items-center bg-[#4b4b4b] text-[11px] text-[#e6e6e6]">
        <div className="flex h-full items-center border-r border-[#666] pl-[5px] pr-1">
          <button type="button" className="flex h-4 w-[98px] items-center gap-1.5 rounded bg-[#0c0c0c] pl-2">
            <Svg w={14} h={14}><path d="M0 0h6v8H0zM8 0h6v5H8zM0 10h6v4H0zM8 7h6v7H8z" fill="#5fb0dc" stroke="none" /></Svg>
            Flexible Grid
          </button>
        </div>
        <div className="ml-auto flex h-full">
          <button type="button" className="h-full w-[132px] border-l border-[#666] pr-1 text-right">uTS_ES_Scalping_Fractal</button>
          <ToolButton label="Grid layout" corner className="w-[37px] border-[#666]"><Svg w={9} h={9}><path d="M0 1.5h9M0 4.5h9M0 7.5h9" strokeWidth="2" strokeDasharray="2 1.5" /></Svg></ToolButton>
          <ToolButton label="Pin" className="w-[37px] border-[#666]"><Svg w={10} h={10}><path d="M5.5 0L10 4.5 8.5 5 6.5 8 2 3.5 5 1.5zM3.5 5.5l1 1L0 10z" fill="currentColor" stroke="none" /></Svg></ToolButton>
          <ToolButton label="Menu" className="w-8 border-[#666]"><ListIcon /></ToolButton>
        </div>
      </div>

      <main className="grid min-h-0 flex-1 grid-cols-[minmax(0,1285fr)_minmax(0,609fr)] gap-x-1.5 bg-[#181818]">
        <MainPanel />
        <section className="flex min-h-0 min-w-0 flex-col bg-[#0a0a0a]">
          <TickPanel />
          <div className="h-2.5 shrink-0 border-y-2 border-[#0a0a0a] bg-[#333]" />
          <EsPanel />
        </section>
      </main>
    </div>
  );
}
